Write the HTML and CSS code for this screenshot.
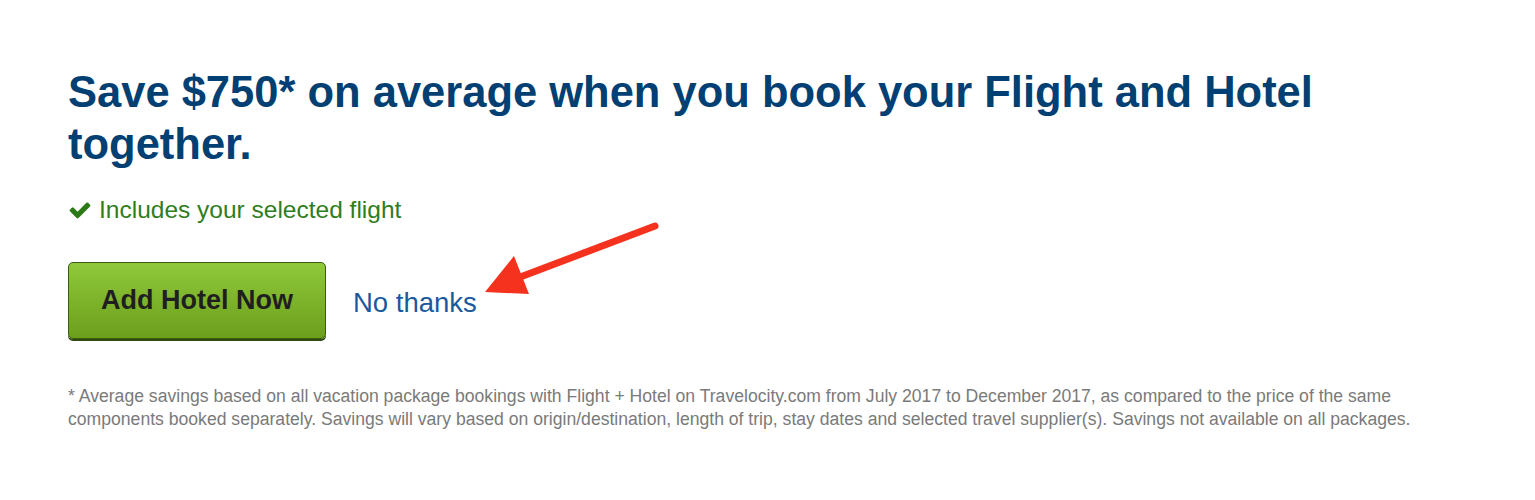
FILE: index.html
```html
<!DOCTYPE html>
<html>
<head>
    <title>Add a Hotel</title>
    <meta charset="utf-8">
    <link rel="stylesheet" href="styles.css">
</head>
<body>
    <div class="upsell">
        <h1>Save $750* on average when you book your Flight and Hotel together.</h1>

        <p class="includes">
            <svg class="check" viewBox="0 0 1792 1792" width="24" height="24" aria-hidden="true">
                <path fill="currentColor" d="M1671 566q0 40-28 68l-724 724-136 136q-28 28-68 28t-68-28l-136-136-362-362q-28-28-28-68t28-68l136-136q28-28 68-28t68 28l294 295 656-657q28-28 68-28t68 28l136 136q28 28 28 68z"/>
            </svg>
            Includes your selected flight
        </p>

        <div class="actions">
            <button class="btn-add" type="button">Add Hotel Now</button>
            <a class="no-thanks" href="#">No thanks</a>
        </div>

        <p class="footnote">* Average savings based on all vacation package bookings with Flight + Hotel on Travelocity.com from July 2017 to December 2017, as compared to the price of the same components booked separately. Savings will vary based on origin/destination, length of trip, stay dates and selected travel supplier(s). Savings not available on all packages.</p>
    </div>

    <!-- annotation arrow drawn over the page -->
    <svg class="arrow" width="200" height="100" viewBox="480 220 200 100" aria-hidden="true">
        <line x1="655" y1="226" x2="515" y2="279" stroke="#f5321e" stroke-width="7" stroke-linecap="round"/>
        <polygon points="485,292 514,256 529,294" fill="#f5321e"/>
    </svg>
</body>
</html>
```

FILE: styles.css
```css
body {
    margin: 0;
    background: #ffffff;
    font-family: "Liberation Sans", Arial, Helvetica, sans-serif;
}

.upsell {
    width: 1380px;
    padding: 66px 0 40px 68px;
}

h1 {
    margin: 0;
    font-size: 43.5px;
    line-height: 52px;
    font-weight: bold;
    color: #023f73;
}

.includes {
    display: flex;
    align-items: center;
    gap: 7px;
    margin: 26px 0 0;
    font-size: 24.5px;
    line-height: 28px;
    color: #2f7d1c;
}

.check {
    color: #2c7a17;
}

.actions {
    display: flex;
    align-items: center;
    gap: 27px;
    margin-top: 38px;
}

.btn-add {
    width: 258px;
    height: 77px;
    padding: 0;
    border: 1px solid #3d5a12;
    border-radius: 5px;
    background: linear-gradient(#8fc93a, #6c9e1c);
    box-shadow: 0 2px 0 #2f4a0c;
    font-family: inherit;
    font-size: 27px;
    font-weight: bold;
    color: #1f1f1f;
    cursor: pointer;
}

.no-thanks {
    margin-top: 4px;
    font-size: 27.5px;
    color: #1a5a9c;
    text-decoration: none;
}

.no-thanks:hover {
    text-decoration: underline;
}

.footnote {
    margin: 46px 0 0;
    font-size: 17.6px;
    line-height: 23px;
    color: #7a7a7a;
}

.arrow {
    position: absolute;
    left: 480px;
    top: 220px;
}
```
